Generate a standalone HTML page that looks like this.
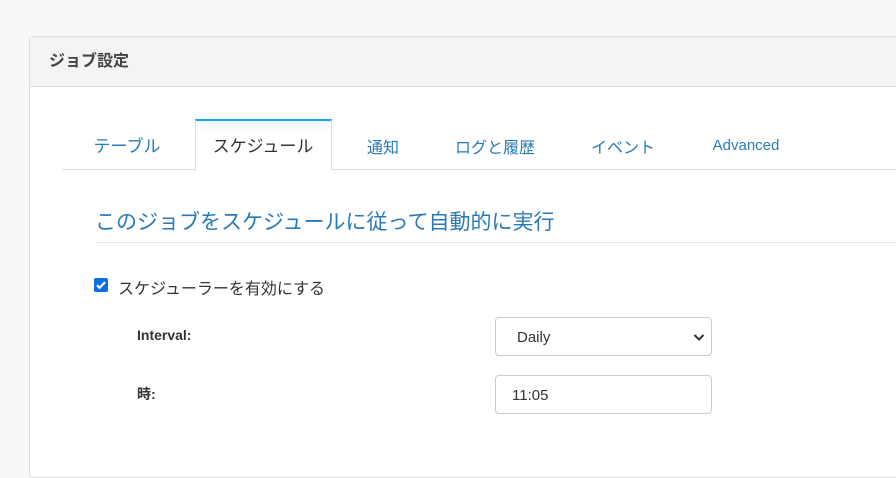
<!DOCTYPE html>
<html><head><meta charset="utf-8"><style>
body{margin:0;width:896px;height:459px;overflow:hidden;background:#f8f8f8;font-family:"Liberation Sans","Noto Sans CJK JP",sans-serif;position:relative}
.panel{position:absolute;left:29px;top:36px;width:900px;height:440px;background:#fff;border:1px solid #ddd;border-radius:3px}
.hd{height:49px;background:#f4f4f4;border-bottom:1px solid #ddd;font-weight:bold;font-size:16px;color:#444;line-height:50px;padding-left:19px}
.abs{position:absolute}
.tabline{left:62px;top:169px;width:900px;height:1px;background:#ddd}
.tab{top:132px;font-size:17px;color:#2a7ab5;transform:translateX(-50%);white-space:nowrap}
.act{left:195px;top:119px;width:137px;height:51px;border:1px solid #ddd;border-top:2px solid #1aa3f0;border-bottom:none;background:linear-gradient(#eef8ff,#fff 12px);box-sizing:border-box}
.lbl{font-weight:bold;font-size:14px;color:#333}
.ctl{left:495px;width:217px;height:39px;border:1px solid #ccc;border-radius:4px;font-size:15px;color:#333;line-height:39px;padding-left:21px;box-sizing:border-box}
</style></head><body>
<div class="panel"><div class="hd">ジョブ設定</div></div>
<div class="abs tabline"></div>
<div class="abs act"></div>
<div class="abs tab" style="left:127px">テーブル</div>
<div class="abs tab" style="left:263px;color:#333">スケジュール</div>
<div class="abs tab" style="left:383px;font-size:16px;top:134px">通知</div>
<div class="abs tab" style="left:495px;font-size:16px;top:134px">ログと履歴</div>
<div class="abs tab" style="left:623px;font-size:16px;top:134px">イベント</div>
<div class="abs tab" style="left:746px;font-size:15px;top:137px">Advanced</div>
<div class="abs" style="left:95px;top:206px;font-size:21px;color:#2a7ab5">このジョブをスケジュールに従って自動的に実行</div>
<div class="abs" style="left:95px;top:242px;width:820px;height:1px;background:#e5e5e5"></div>
<div class="abs" style="left:94px;top:278px;width:14px;height:14px;background:#0a6fe0;border-radius:2px"><svg width="14" height="14" viewBox="0 0 14 14"><path d="M3 7.2l2.6 2.6L11 4.2" stroke="#fff" stroke-width="2.2" fill="none"/></svg></div>
<div class="abs" style="left:118px;top:275px;font-size:16px;color:#333">スケジューラーを有効にする</div>
<div class="abs lbl" style="left:137px;top:327px">Interval:</div>
<div class="abs lbl" style="left:137px;top:384px">時:</div>
<div class="abs ctl" style="top:317px">Daily<svg style="position:absolute;right:6px;top:15px" width="12" height="9" viewBox="0 0 12 9"><path d="M1.5 2l4.5 4.5L10.5 2" stroke="#333" stroke-width="2" fill="none"/></svg></div>
<div class="abs ctl" style="top:375px;padding-left:16px">11:05</div>
</body></html>
